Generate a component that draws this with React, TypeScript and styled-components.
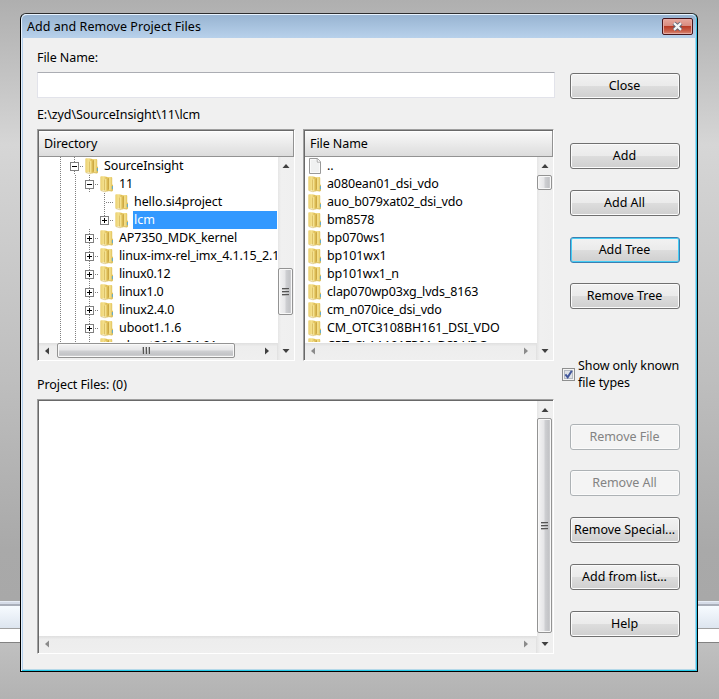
import React from "react";
import styled, { createGlobalStyle, css } from "styled-components";

const Global = createGlobalStyle`
  * { box-sizing: border-box; }
  html, body { margin: 0; width: 719px; height: 699px; overflow: hidden; }
  body { font: 12.5px/18px "Noto Sans", "Open Sans", sans-serif; letter-spacing: -0.08px; color: #000; }
`;

const Desktop = styled.div`
  display: grid;
  width: 719px;
  height: 699px;
  grid-template: 699px / 719px;
`;
const Backdrop = styled.div`
  grid-area: 1 / 1;
  display: flex;
  flex-direction: column;
`;
const Shade = styled.div`
  height: 601px;
  background: linear-gradient(#afafaf 0, #d6d6d6 145px, #d2d2d2 180px, #bebebe 380px, #a9a9a9 550px, #a8a8a8 601px);
`;
const Strip = styled.div`
  height: 42px;
  background: linear-gradient(#e8edf5 0 1px, #d5dbe7 1px 3px, #a9aeb9 3px 5px, #f7fbff 5px, #dde5ef 27px, #a0a0a0 27px 28px, #fff 28px 41px, #828282 41px 42px);
`;
const Floor = styled.div`
  flex: 1;
  background: linear-gradient(#c0c0c0, #b2b2b2);
`;

const Dialog = styled.section`
  grid-area: 1 / 1;
  margin: 13px 0 0 20px;
  width: 678px;
  height: 659px;
  border: 1px solid #000;
  border-top-color: #2d2d2d;
  border-radius: 6px 6px 0 0;
  background: #f0f0f0;
  box-shadow: inset 1px 0 #e6f1fb, inset -1px 0 #38c3e6, inset 0 -1px #22c8e8, inset 2px 0 #b5d0ec, inset -2px 0 #a8d5ec, inset 0 -2px #b4d8e8;
  display: flex;
  flex-direction: column;
`;
const TitleBar = styled.header`
  height: 24px;
  margin: 0 1px;
  padding: 2px 3px 0 5px;
  display: flex;
  justify-content: space-between;
  border-top: 1px solid #e9f4ff;
  border-radius: 5px 5px 0 0;
  background: linear-gradient(#98b4d1, #a6c1dd 45%, #b8d1eb);
`;
const Title = styled.span`
  line-height: 20px;
  letter-spacing: 0.04px;
`;
const CloseBox = styled.button`
  width: 31px;
  height: 17px;
  margin-top: 1px;
  padding: 0;
  display: flex;
  align-items: center;
  justify-content: center;
  border: 1px solid #47161c;
  border-radius: 2px;
  box-shadow: inset 0 0 0 1px #e5aaa3;
  background: linear-gradient(#e7a79c, #d88a7e 47%, #b93c27 50%, #c9614c 80%, #d98c79);
`;
const Content = styled.div`
  display: flex;
  padding: 11px 0 0 16px;
`;
const Main = styled.div`
  width: 517px;
  display: flex;
  flex-direction: column;
`;
const Caption = styled.div<{ $gap?: number }>`
  height: 18px;
  margin-top: ${(p) => p.$gap ?? 0}px;
  white-space: pre;
`;
const Field = styled.input`
  width: 518px;
  height: 26px;
  margin-top: 5px;
  border: 1px solid #e2e3ea;
  border-top-color: #abadb3;
  background: #fff;
  outline: 0;
`;
const Panes = styled.div`
  display: flex;
  gap: 8px;
  margin-top: 5px;
`;
const Pane = styled.div<{ $w: number; $h: number }>`
  width: ${(p) => p.$w}px;
  height: ${(p) => p.$h}px;
  flex: none;
  display: flex;
  flex-direction: column;
  border: 1px solid #a0a0a0;
  border-right-color: #fff;
  border-bottom-color: #fff;
  background: #fff;
  box-shadow: inset 1px 1px #696969;
  padding: 1px 0 0 1px;
`;
const PaneHead = styled.div`
  height: 26px;
  flex: none;
  padding: 4px 0 0 5px;
  border-right: 1px solid #929292;
  border-bottom: 1px solid #929292;
  box-shadow: inset 0 1px #fff;
  background: linear-gradient(#fafafa, #dcdcdc);
`;
const PaneBody = styled.div`
  flex: 1;
  min-height: 0;
  display: flex;
`;
const View = styled.div`
  flex: 1;
  min-width: 0;
  display: flex;
  flex-direction: column;
`;
const Rows = styled.div`
  flex: 1;
  min-height: 0;
  margin: 0 1px 1px 0;
  overflow: hidden;
  white-space: nowrap;
`;
const Row = styled.div`
  height: 18px;
  display: flex;
  svg { flex: none; }
`;
const Name = styled.span<{ $selected?: boolean; $ls?: number }>`
  height: 18px;
  padding-left: 1px;
  margin-left: 4px;
  line-height: 17px;
  letter-spacing: ${(p) => p.$ls ?? -0.05}px;
  ${(p) => p.$selected && css`
    flex: 1;
    color: #fff;
    background: #3399ff;
  `}
`;

const VBar = styled.div`
  width: 16px;
  flex: none;
  display: flex;
  flex-direction: column;
  justify-content: space-between;
  background: linear-gradient(90deg, #e6e6e6, #f0f0f0 20%, #efefef);
`;
const HBar = styled.div`
  height: 17px;
  flex: none;
  display: flex;
  justify-content: space-between;
  border-right: 1px solid #e2e2e2;
  background: linear-gradient(#dfdfdf, #ededed 20%, #efefef);
`;
const Thumb = styled.div<{ $vertical?: boolean; $size: number; $gap: number; $lift?: boolean }>`
  display: flex;
  flex: none;
  align-items: center;
  justify-content: center;
  border: 1px solid #939393;
  border-radius: 2px;
  box-shadow: inset 0 0 0 1px #f8f8f8;
  ${(p) => p.$vertical
    ? css`width: 15px; height: ${p.$size}px; margin: ${p.$lift ? -1 : 0}px 0 ${p.$gap}px;
        background: linear-gradient(90deg, #f4f4f4, #e6e6e8 45%, #cecfd2 55%, #c3c4c7 80%, #d6d6d8);`
    : css`height: 15px; width: ${p.$size}px; margin-right: ${p.$gap}px;
        background: linear-gradient(#f4f4f4, #e6e6e8 45%, #cecfd2 55%, #c3c4c7 80%, #d6d6d8);`}
`;

const Side = styled.div`
  width: 119px;
  margin-left: 7px;
  padding: 24px 0 0 9px;
  display: flex;
  flex-direction: column;
`;
const Push = styled.button<{ $gap?: number; $hot?: boolean }>`
  width: 110px;
  height: 26px;
  flex: none;
  margin: ${(p) => p.$gap ?? 0}px 0 0;
  padding: 0 1px 1px 0;
  font: inherit;
  letter-spacing: -0.03px;
  color: #000;
  white-space: nowrap;
  border: 1px solid ${(p) => (p.$hot ? "#3c7fb1" : "#707070")};
  border-radius: 3px;
  box-shadow: inset 0 0 0 1px ${(p) => (p.$hot ? "#45cdf5" : "#fbfbfb")};
  background: linear-gradient(#f2f2f2, #ebebeb 48%, #dddddd 50%, #cfcfcf);
  display: flex;
  align-items: center;
  justify-content: center;
  &:disabled {
    color: #838383;
    border-color: #adb2b5;
    background: #f4f4f4;
  }
`;
const CheckRow = styled.label`
  display: flex;
  gap: 3px;
  margin: 48px -4px 0 -8px;
  line-height: 17px;
  white-space: pre;
  svg { flex: none; margin-top: 11px; }
`;

const arrowPaths = {
  up: "M4 2 7.5 6H.5Z",
  down: "M.5 2h7L4 6Z",
  left: "M2 4 6 .5v7Z",
  right: "M6 4 2 .5v7Z",
};
const ArrowSlot = styled.span<{ $across?: boolean }>`
  display: flex;
  flex: none;
  align-items: center;
  justify-content: center;
  width: ${(p) => (p.$across ? 16 : 16)}px;
  margin-right: ${(p) => (p.$across ? 2 : 0)}px;
  height: ${(p) => (p.$across ? 15 : 18)}px;
`;
const Arrow = ({ dir, dim }: { dir: keyof typeof arrowPaths; dim?: boolean }) => (
  <ArrowSlot $across={dir === "left" || dir === "right"}>
    <svg width="8" height="8">
      <path d={arrowPaths[dir]} fill={dim ? "#8b8b8b" : "#404040"} />
    </svg>
  </ArrowSlot>
);

const Grip = ({ vertical }: { vertical?: boolean }) => (
  <svg width="9" height="9" shapeRendering="crispEdges">
    <g transform={vertical ? undefined : "rotate(90 4.5 4.5)"}>
      {[1, 4, 7].map((y) => (
        <React.Fragment key={y}>
          <path d={`M1 ${y}.5h7`} stroke="#555" />
          <path d={`M1 ${y + 1}.5h7`} stroke="#b5b5b5" />
        </React.Fragment>
      ))}
    </g>
  </svg>
);

const Folder = () => (
  <svg width="14" height="18">
    <defs>
      <linearGradient id="back" x2="1" y2="0">
        <stop offset="0" stopColor="#ebd072" />
        <stop offset=".5" stopColor="#f4e08b" />
        <stop offset="1" stopColor="#dab548" />
      </linearGradient>
      <linearGradient id="flap" x2="1" y2="0">
        <stop offset="0" stopColor="#fff3b0" />
        <stop offset="0.55" stopColor="#e2c45e" />
        <stop offset="1" stopColor="#c29b36" />
      </linearGradient>
    </defs>
    <path d="M7 2h4.6l.6.7v6.5l.8 1v5.3l-1 .8H7Z" fill="url(#back)" />
    <path d="M.3 2 .8 1.3h3.5L7.2 2v12l-2 1.5H.7L.3 15Z" fill="url(#back)" />
    <path d="M4.6 4.2 8.9 3v11.4l-3.4 2-.9-.7Z" fill="url(#flap)" />
    <path d="M4.5 4.5v11" stroke="#cbaa4b" strokeWidth=".6" />
    <path d="M12.4 11v3.2" stroke="#5aa9d3" />
    <path d="M.8 15.5 5 16.8l3.8-1.4 3.4.7" stroke="#d0b45a" strokeWidth=".6" fill="none" />
  </svg>
);

const Page = () => (
  <svg width="14" height="18">
    <path d="M1.5 1.5h8l3 3.4v11.6h-11Z" fill="#fafafa" stroke="#999" />
    <path d="M3 3h5.5v3H11v9H3Z" fill="#f0f1f1" />
    <path d="M9.2 1.7v3.5h3.1" fill="#fff" stroke="#999" strokeWidth=".8" />
  </svg>
);

/* Connector lines are given as x offsets inside the tree's left gutter. */
type Node = { name: string; depth: number; sign?: "+" | "-"; lines: number[]; above?: boolean; below?: boolean; selected?: boolean; ls?: number };
const Guides = ({ node }: { node: Node }) => {
  const width = 31 + node.depth * 15 + 15;
  const x = width - 11;
  const dots = { stroke: "#808080", strokeDasharray: "1 1" };
  return (
    <svg width={width} height="18" shapeRendering="crispEdges">
      {node.lines.map((l) => <path key={l} d={`M${l + 0.5} 0V18`} {...dots} />)}
      {node.above && <path d={`M${x + 0.5} 0V9`} {...dots} />}
      {node.below && <path d={`M${x + 0.5} 10V18`} {...dots} />}
      <path d={`M${x + (node.sign ? 6 : 2)} 9.5H${width - 1}`} {...dots} />
      {node.sign && (
        <>
          <rect x={x - 3.5} y="5.5" width="8" height="8" fill="#fff" stroke="#808080" />
          <path d={`M${x - 2} 9.5h5`} stroke="#000" />
          {node.sign === "+" && <path d={`M${x + 0.5} 7v5`} stroke="#000" />}
        </>
      )}
    </svg>
  );
};

const top = (name: string, ls?: number): Node => ({ name, ls, depth: 1, sign: "+", lines: [21, 36], above: true, below: true });
const tree: Node[] = [
  { name: "SourceInsight", depth: 0, sign: "-", lines: [21], above: true, below: true, ls: -0.15 },
  { ...top("11"), sign: "-" },
  { name: "hello.si4project", depth: 2, lines: [21, 36], above: true, below: true, ls: -0.08 },
  { name: "lcm", depth: 2, sign: "+", lines: [21, 36], above: true, selected: true },
  top("AP7350_MDK_kernel", -0.13),
  top("linux-imx-rel_imx_4.1.15_2.1.0", -0.15),
  top("linux0.12", -0.2),
  top("linux1.0", -0.2),
  top("linux2.4.0", -0.15),
  top("uboot1.1.6", -0.1),
  top("uboot2018.04.01"),
];
const files: [string, number?][] = [
  ["a080ean01_dsi_vdo", -0.14], ["auo_b079xat02_dsi_vdo", -0.16], ["bm8578", -0.1], ["bp070ws1", -0.1],
  ["bp101wx1", -0.1], ["bp101wx1_n", -0.2], ["clap070wp03xg_lvds_8163", -0.14], ["cm_n070ice_dsi_vdo", -0.2],
  ["CM_OTC3108BH161_DSI_VDO"], ["CPT_CLAA101FP01_DSI_VDO", -0.2],
];
const FileRows = styled(Rows)`
  padding-left: 3px;
`;

export default function App() {
  return (
    <Desktop>
      <Global />
      <Backdrop><Shade /><Strip /><Floor /></Backdrop>
      <Dialog>
        <TitleBar>
          <Title>Add and Remove Project Files</Title>
          <CloseBox aria-label="Close window">
            <svg width="13" height="11">
              <path d="M3 2.2 10 8.8M10 2.2 3 8.8" stroke="#5b6475" strokeWidth="4.2" />
              <path d="M3 2.2 10 8.8M10 2.2 3 8.8" stroke="#f4f4f4" strokeWidth="2.3" />
            </svg>
          </CloseBox>
        </TitleBar>
        <Content>
          <Main>
            <Caption>File Name:</Caption>
            <Field />
            <Caption $gap={8}>E:\zyd\SourceInsight\11\lcm</Caption>
            <Panes>
              <Pane $w={258} $h={232}>
                <PaneHead>Directory</PaneHead>
                <PaneBody>
                  <View>
                    <Rows>
                      {tree.map((n) => (
                        <Row key={n.name}>
                          <Guides node={n} />
                          <Folder />
                          <Name $selected={n.selected} $ls={n.ls}>{n.name}</Name>
                        </Row>
                      ))}
                    </Rows>
                    <HBar>
                      <Arrow dir="left" />
                      <Thumb $size={178} $gap={24}><Grip /></Thumb>
                      <Arrow dir="right" />
                    </HBar>
                  </View>
                  <VBar>
                    <Arrow dir="up" />
                    <Thumb $vertical $size={47} $gap={-66}><Grip vertical /></Thumb>
                    <Arrow dir="down" />
                  </VBar>
                </PaneBody>
              </Pane>
              <Pane $w={251} $h={232}>
                <PaneHead>File Name</PaneHead>
                <PaneBody>
                  <View>
                    <FileRows>
                      <Row><Page /><Name>..</Name></Row>
                      {files.map(([f, ls]) => <Row key={f}><Folder /><Name $ls={ls}>{f}</Name></Row>)}
                    </FileRows>
                    <HBar><Arrow dir="left" dim /><Arrow dir="right" dim /></HBar>
                  </View>
                  <VBar>
                    <Arrow dir="up" />
                    <Thumb $vertical $size={15} $gap={152} />
                    <Arrow dir="down" />
                  </VBar>
                </PaneBody>
              </Pane>
            </Panes>
            <Caption $gap={15}>Project Files: (0)</Caption>
            <Panes>
              <Pane $w={517} $h={255}>
                <PaneBody>
                  <View>
                    <Rows />
                    <HBar><Arrow dir="left" dim /><Arrow dir="right" dim /></HBar>
                  </View>
                  <VBar>
                    <Arrow dir="up" />
                    <Thumb $vertical $lift $size={215} $gap={2}><Grip vertical /></Thumb>
                    <Arrow dir="down" />
                  </VBar>
                </PaneBody>
              </Pane>
            </Panes>
          </Main>
          <Side>
            <Push>Close</Push>
            <Push $gap={44}>Add</Push>
            <Push $gap={21}>Add All</Push>
            <Push $gap={21} $hot>Add Tree</Push>
            <Push $gap={20}>Remove Tree</Push>
            <CheckRow>
              <svg width="13" height="13">
                <rect x=".5" y=".5" width="12" height="12" fill="#f4f4f4" stroke="#8e8f8f" />
                <rect x="2.5" y="2.5" width="8" height="8" fill="#dfe2e6" stroke="#b5bac1" />
                <path d="M3.4 6.4 5.7 9.3 9.8 2.8" fill="none" stroke="#42579b" strokeWidth="2" />
              </svg>
              <span>{"Show only known\nfile types"}</span>
            </CheckRow>
            <Push $gap={33} disabled>Remove File</Push>
            <Push $gap={20} disabled>Remove All</Push>
            <Push $gap={21}>Remove Special...</Push>
            <Push $gap={21}>Add from list...</Push>
            <Push $gap={21}>Help</Push>
          </Side>
        </Content>
      </Dialog>
    </Desktop>
  );
}
